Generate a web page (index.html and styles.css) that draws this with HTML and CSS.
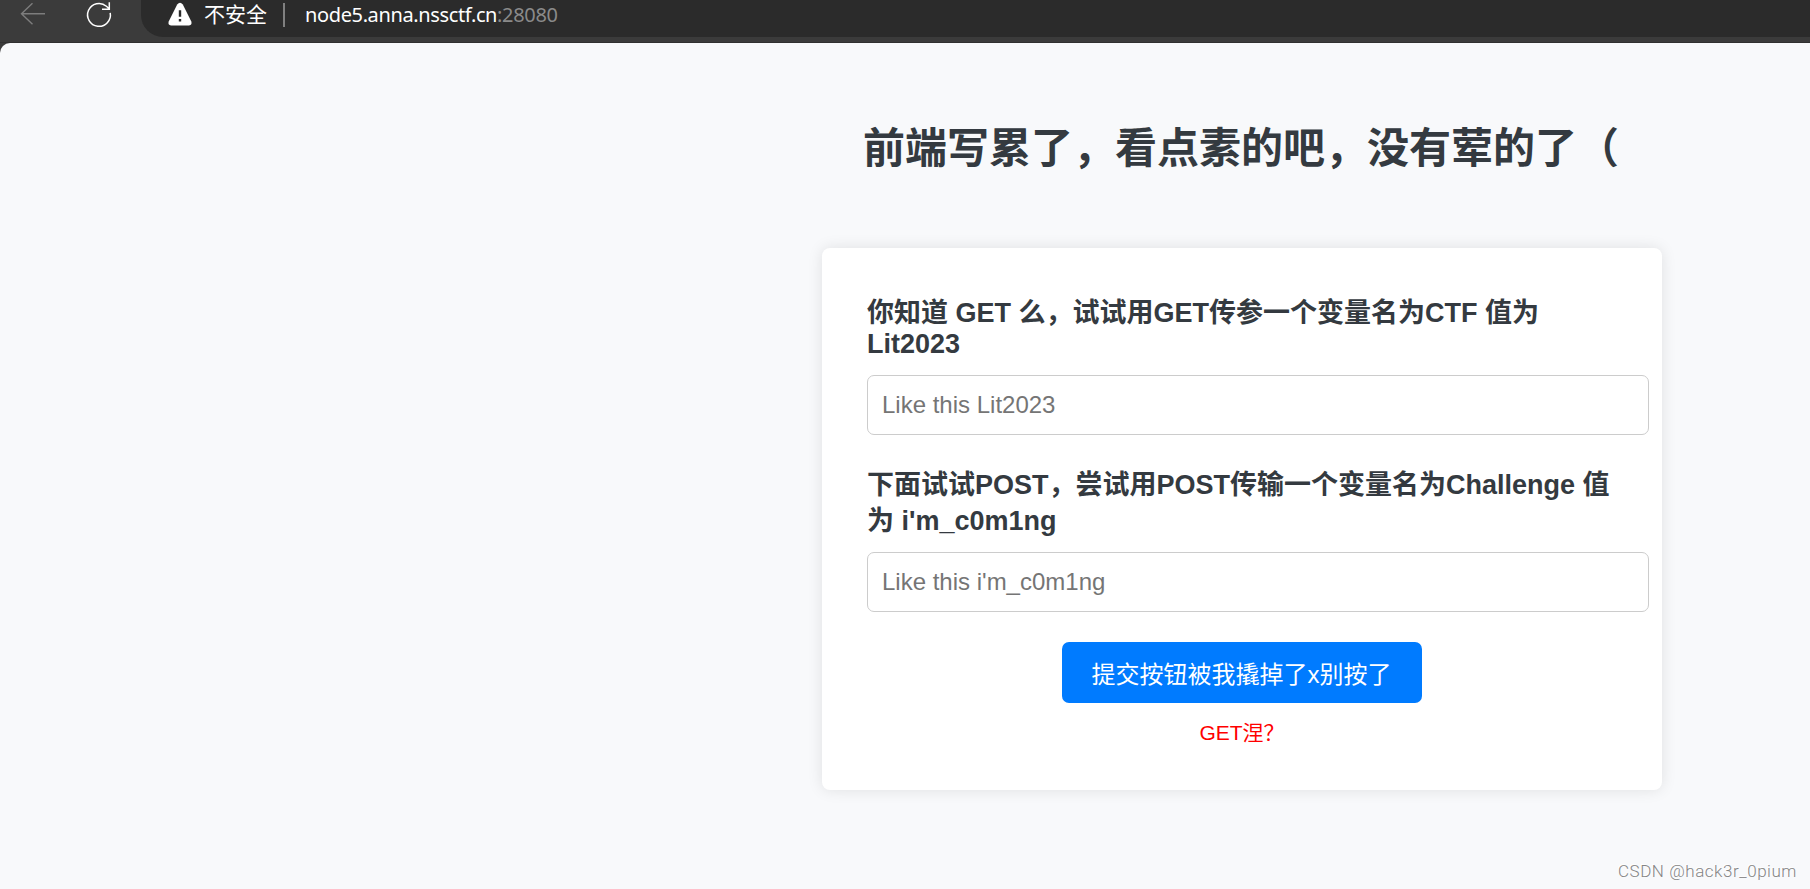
FILE: index.html
```html
<!DOCTYPE html>
<html lang="zh-CN">
<head>
<meta charset="utf-8">
<title>node5.anna.nssctf.cn:28080</title>
<link rel="stylesheet" href="styles.css">
</head>
<body>
<header class="toolbar">
  <svg class="nav-icons" width="141" height="37" viewBox="0 0 141 37" fill="none">
    <path d="M45 13.7H21.5M32.5 3.2L21.5 13.7L32.5 24.2" stroke="#7d7d7d" stroke-width="1.4"/>
    <path d="M110.2 12.8A11.4 11.4 0 1 1 106.4 6.2L109.2 8.8M109.3 2.3V9.3H102" stroke="#fff" stroke-width="1.5"/>
  </svg>
  <div class="address">
    <svg class="warning" width="26" height="25" viewBox="0 0 26 25">
      <path d="M10.2 3.6Q13 0 15.8 3.6L24.3 20.5Q25.4 24 22 24.4H4Q.6 24 1.7 20.5Z" fill="#fff"/>
      <path d="M13 9.2V15.8M13 18V20.6" stroke="#2b2b2b" stroke-width="2.4"/>
    </svg>
    <span class="unsafe">不安全</span>
    <span class="divider"></span>
    <span class="url"><span class="host">node5.anna.nssctf.cn</span><span class="port">:28080</span></span>
  </div>
</header>
<main class="page">
  <h1 class="title">前端写累了，看点素的吧，没有荤的了（</h1>
  <form class="card">
    <label class="label label-get" for="get">你知道 GET 么，试试用GET传参一个变量名为CTF 值为<br>Lit2023</label>
    <input class="field" id="get" type="text" placeholder="Like this Lit2023">
    <label class="label label-post" for="post">下面试试POST，尝试用POST传输一个变量名为Challenge 值<br>为 i'm_c0m1ng</label>
    <input class="field" id="post" type="text" placeholder="Like this i'm_c0m1ng">
    <button class="submit" type="button">提交按钮被我撬掉了x别按了</button>
    <p class="message">GET涅？</p>
  </form>
  <div class="watermark">CSDN @hack3r_0pium</div>
</main>
</body>
</html>
```
FILE: styles.css
```css
* { box-sizing: border-box; }
body {
  margin: 0;
  height: 889px;
  overflow: hidden;
  background: #3b3b3b;
  font-family: "Liberation Sans", "Noto Sans CJK SC", sans-serif;
}
.toolbar {
  display: flex;
  height: 43px;
  align-items: flex-start;
  border-bottom: 1px solid #303030;
}
.nav-icons { flex: none; }
.address {
  flex: 1;
  display: flex;
  height: 37px;
  padding: 0 0 0 26px;
  align-items: flex-start;
  background: #2b2b2b;
  border-bottom-left-radius: 22px;
  font-family: "Noto Sans", "Noto Sans CJK SC", sans-serif;
  font-size: 21px;
  line-height: 28px;
  color: #fff;
  white-space: nowrap;
}
.warning { flex: none; margin-top: 1px; }
.unsafe { margin-left: 11px; width: 79px; font-family: "Noto Sans CJK SC", sans-serif; line-height: 26px; }
.divider { width: 2px; height: 24px; margin: 3px 20px 0 0; background: #808080; }
.host { display: inline-block; width: 192px; font-size: 20px; letter-spacing: -0.37px; }
.port { font-size: 20px; letter-spacing: -0.3px; color: #8a8a8a; }
.page {
  display: flex;
  flex-direction: column;
  height: 846px;
  padding-left: 822px;
  background: #f8f9fb;
  border-top-left-radius: 10px;
}
.title {
  width: 838px;
  height: 205px;
  margin: 0;
  padding-top: 74px;
  font-size: 42px;
  line-height: 64px;
  text-align: center;
  white-space: nowrap;
  color: #343a40;
}
.card {
  display: flex;
  flex-direction: column;
  width: 840px;
  height: 542px;
  padding: 47px 13px 0 45px;
  background: #fff;
  border-radius: 8px;
  box-shadow: 0 0 15px rgba(0, 0, 0, .1);
}
.label {
  font-size: 27px;
  font-weight: 700;
  color: #343a40;
  white-space: nowrap;
}
.label-get { height: 80px; line-height: 31px; padding-top: 3px; }
.label-post { height: 117px; line-height: 36px; padding-top: 32px; }
.field {
  width: 782px;
  height: 60px;
  padding: 0 14px;
  border: 1px solid #ccc;
  border-radius: 7px;
  background: #fff;
  font: 24px "Liberation Sans", sans-serif;
}
.field::placeholder { color: #757575; }
.submit {
  width: 360px;
  height: 61px;
  margin: 30px 0 0 195px;
  padding: 0 1px 0 0;
  border: 0;
  border-radius: 7px;
  background: #007bff;
  color: #fff;
  font: 24px "Liberation Sans", "Noto Sans CJK SC", sans-serif;
  white-space: nowrap;
}
.message {
  width: 750px;
  margin: 15px 0 0;
  font-size: 21px;
  line-height: 30px;
  text-align: center;
  color: #f00;
}
.watermark {
  align-self: flex-end;
  margin: 69px 13px 0 0;
  font: 300 17px/24px Roboto, sans-serif;
  letter-spacing: 0.55px;
  color: #858585;
  text-shadow: -1px -1px 0 #fff;
}
```
